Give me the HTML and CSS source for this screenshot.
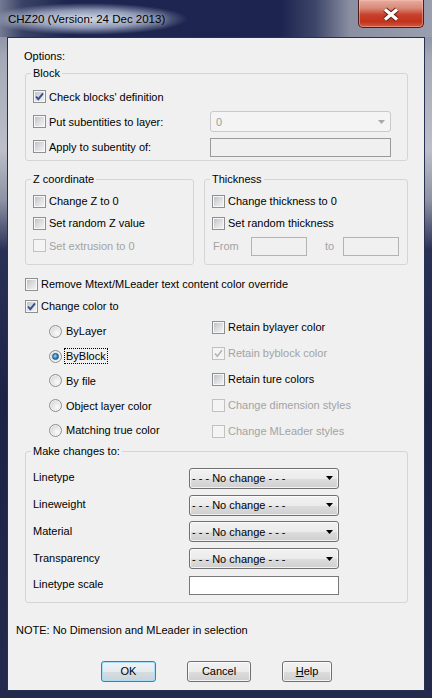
FILE: index.html
```html
<!DOCTYPE html>
<html>
<head>
<meta charset="utf-8">
<link rel="stylesheet" href="styles.css">
</head>
<body>
<div class="window">
  <header class="titlebar">
    <span class="title">CHZ20 (Version: 24 Dec 2013)</span>
    <span class="close">
      <svg width="18" height="15" viewBox="0 0 18 15">
        <path d="M3 2.5 L15 12.5 M15 2.5 L3 12.5" stroke="#5a1d14" stroke-width="5.2" fill="none"/>
        <path d="M3 2.5 L15 12.5 M15 2.5 L3 12.5" stroke="#ffffff" stroke-width="3.4" fill="none"/>
      </svg>
    </span>
  </header>
  <main class="client">
    <div class="options-label">Options:</div>

    <fieldset class="group g-block">
      <legend>Block</legend>
      <div class="row r25">
        <label class="opt"><span class="cb"><svg class="tick" width="11" height="11" viewBox="0 0 11 11"><polyline points="2,5.5 4.3,8.2 9,2.3" fill="none" stroke="#324f8e" stroke-width="1.9"/></svg></span><span>Check blocks' definition</span></label>
      </div>
      <div class="row r25">
        <label class="opt w177"><span class="cb"></span><span>Put subentities to layer:</span></label>
        <div class="dcombo"><span>0</span><svg width="7" height="4" viewBox="0 0 7 4"><polygon points="0,0 7,0 3.5,4" fill="#a8a8a8"/></svg></div>
      </div>
      <div class="row r25">
        <label class="opt w177"><span class="cb"></span><span>Apply to subentity of:</span></label>
        <div class="dtext"></div>
      </div>
    </fieldset>

    <div class="pair">
      <fieldset class="group g-z">
        <legend>Z coordinate</legend>
        <div class="row r22"><label class="opt"><span class="cb"></span><span>Change Z to 0</span></label></div>
        <div class="row r22"><label class="opt"><span class="cb"></span><span>Set random Z value</span></label></div>
        <div class="row r23"><label class="opt dis"><span class="cb off"></span><span>Set extrusion to 0</span></label></div>
      </fieldset>
      <fieldset class="group g-t">
        <legend>Thickness</legend>
        <div class="row r22"><label class="opt"><span class="cb"></span><span>Change thickness to 0</span></label></div>
        <div class="row r22"><label class="opt"><span class="cb"></span><span>Set random thickness</span></label></div>
        <div class="row r23 from-row">
          <span class="from-lbl dis">From</span>
          <span class="small-box"></span>
          <span class="to-lbl dis">to</span>
          <span class="small-box"></span>
        </div>
      </fieldset>
    </div>

    <div class="row r22 first-top"><label class="opt"><span class="cb"></span><span>Remove Mtext/MLeader text content color override</span></label></div>
    <div class="row r22"><label class="opt"><span class="cb"><svg class="tick" width="11" height="11" viewBox="0 0 11 11"><polyline points="2,5.5 4.3,8.2 9,2.3" fill="none" stroke="#324f8e" stroke-width="1.9"/></svg></span><span>Change color to</span></label></div>

    <div class="colors">
      <div class="col-left">
        <div class="row rl"><label class="opt"><span class="rb"></span><span class="rtxt">ByLayer</span></label></div>
        <div class="row rl"><label class="opt"><span class="rb on"><span class="dot"></span></span><span class="rtxt focus">ByBlock</span></label></div>
        <div class="row rl"><label class="opt"><span class="rb"></span><span class="rtxt">By file</span></label></div>
        <div class="row rl"><label class="opt"><span class="rb"></span><span class="rtxt">Object layer color</span></label></div>
        <div class="row rl"><label class="opt"><span class="rb"></span><span class="rtxt">Matching true color</span></label></div>
      </div>
      <div class="col-right">
        <div class="row rr"><label class="opt"><span class="cb"></span><span>Retain bylayer color</span></label></div>
        <div class="row rr"><label class="opt dis"><span class="cb off"><svg class="tick" width="11" height="11" viewBox="0 0 11 11"><polyline points="2,5.5 4.3,8.2 9,2.3" fill="none" stroke="#b4b4b4" stroke-width="1.6"/></svg></span><span>Retain byblock color</span></label></div>
        <div class="row rr"><label class="opt"><span class="cb"></span><span>Retain ture colors</span></label></div>
        <div class="row rr"><label class="opt dis"><span class="cb off"></span><span>Change dimension styles</span></label></div>
        <div class="row rr"><label class="opt dis"><span class="cb off"></span><span>Change MLeader styles</span></label></div>
      </div>
    </div>

    <fieldset class="group g-make">
      <legend>Make changes to:</legend>
      <div class="row rm"><span class="mlbl">Linetype</span><div class="combo"><span>- - - No change - - -</span><svg width="7" height="4" viewBox="0 0 7 4"><polygon points="0,0 7,0 3.5,4" fill="#000"/></svg></div></div>
      <div class="row rm"><span class="mlbl">Lineweight</span><div class="combo"><span>- - - No change - - -</span><svg width="7" height="4" viewBox="0 0 7 4"><polygon points="0,0 7,0 3.5,4" fill="#000"/></svg></div></div>
      <div class="row rm"><span class="mlbl">Material</span><div class="combo"><span>- - - No change - - -</span><svg width="7" height="4" viewBox="0 0 7 4"><polygon points="0,0 7,0 3.5,4" fill="#000"/></svg></div></div>
      <div class="row rm"><span class="mlbl">Transparency</span><div class="combo"><span>- - - No change - - -</span><svg width="7" height="4" viewBox="0 0 7 4"><polygon points="0,0 7,0 3.5,4" fill="#000"/></svg></div></div>
      <div class="row rm"><span class="mlbl">Linetype scale</span><div class="wtext"></div></div>
    </fieldset>

    <p class="note">NOTE: No Dimension and MLeader in selection</p>

    <div class="buttons">
      <span class="btn btn-ok">OK</span>
      <span class="btn btn-cancel">Cancel</span>
      <span class="btn btn-help"><u>H</u>elp</span>
    </div>
  </main>
</div>
</body>
</html>
```

FILE: styles.css
```css
html, body {
  margin: 0;
  padding: 0;
}
body {
  width: 432px;
  height: 698px;
  overflow: hidden;
  font-family: "Liberation Sans", Arial, sans-serif;
  font-size: 11px;
  color: #000;
}
.window {
  width: 432px;
  height: 698px;
  box-sizing: border-box;
  padding: 0 7px 7px 7px;
  display: flex;
  flex-direction: column;
  background: linear-gradient(to bottom, #6f7690 0px, #a6aab8 60px, #bcbfc8 150px, #8d92a4 200px, #2a3156 250px, #1c2347 400px, #232a4d 698px);
}
.titlebar {
  height: 37px;
  margin: 0 -7px;
  display: flex;
  align-items: flex-start;
  flex-shrink: 0;
  background:
    radial-gradient(ellipse 100px 16px at 88px 19px, rgba(214,222,236,0.95) 0%, rgba(190,200,222,0.7) 55%, rgba(60,70,110,0) 100%),
    linear-gradient(to right, #737a92 0px, #3a4366 22px, #1d2550 70px, #1c244f 280px, #3d4669 315px, #8a8fa2 350px, #9a9eae 432px);
}
.title {
  margin-top: 12px;
  padding-left: 8px;
  font-size: 11.5px;
  line-height: 14px;
  color: #000;
  text-shadow: 0 0 6px rgba(255,255,255,0.8);
}
.close {
  margin-left: auto;
  margin-right: 8px;
  width: 66px;
  height: 28px;
  box-sizing: border-box;
  border: 1px solid #4e1c1c;
  border-top: none;
  border-radius: 0 0 5px 5px;
  background: linear-gradient(to bottom, #e6ad9f 0%, #d98a78 30%, #c8412b 55%, #c3321d 80%, #d25a40 100%);
  box-shadow: inset 0 0 0 1px rgba(255,200,190,0.45);
  display: flex;
  align-items: center;
  justify-content: center;
  padding-top: 1px;
}
.client {
  height: 654px;
  box-sizing: border-box;
  border: 1px solid #283150;
  background: #f0f0f0;
  padding: 11px 16px 0 17px;
}
.options-label {
  line-height: 14px;
  margin-left: -1px;
}
.group {
  margin: 3px 0 0 0;
  padding: 3px 7px 1px 7px;
  border: 1px solid #d5d5d5;
  border-radius: 3px;
  min-width: 0;
  box-sizing: border-box;
}
.group legend {
  padding: 0 2px;
  margin-left: -2px;
  line-height: 15px;
}
.row {
  display: flex;
  align-items: center;
}
.r25 { height: 25px; }
.r22 { height: 22px; }
.r23 { height: 23px; }
.opt {
  display: flex;
  align-items: center;
  gap: 3px;
  white-space: nowrap;
}
.w177 { width: 177px; }
.dis { color: #a3a3a3; }
.cb {
  width: 13px;
  height: 13px;
  box-sizing: border-box;
  border: 1px solid #8e8f8f;
  background: linear-gradient(135deg, #b9bcc1 0%, #dcdde0 50%, #f6f6f6 100%);
  box-shadow: inset 0 0 0 1px #f7f7f7;
  flex-shrink: 0;
  display: block;
  position: relative;
}
.cb .tick {
  display: block;
}
.cb.off {
  border-color: #c1c1c1;
  background: #f4f4f4;
  box-shadow: none;
}
.rb {
  width: 13px;
  height: 13px;
  box-sizing: border-box;
  border-radius: 50%;
  border: 1px solid #8e8f8f;
  background: radial-gradient(circle at 65% 65%, #fbfbfb 0%, #e6e6e6 45%, #c8c9cc 100%);
  box-shadow: inset 0 0 0 1px #f2f2f2;
  display: flex;
  align-items: center;
  justify-content: center;
  flex-shrink: 0;
}
.rb .dot {
  width: 7px;
  height: 7px;
  border-radius: 50%;
  box-sizing: border-box;
  border: 1px solid #1c4f79;
  background: radial-gradient(circle at 40% 40%, #9fdcf8 0%, #3c95cf 45%, #0e4f86 100%);
}
.rtxt {
  border: 1px dotted transparent;
  padding: 0 1px;
  line-height: 14px;
  margin-left: -1px;
}
.rtxt.focus {
  border-color: #000;
}
.dcombo {
  width: 181px;
  height: 21px;
  box-sizing: border-box;
  border: 1px solid #c9c9c9;
  border-radius: 3px;
  background: #f4f4f4;
  color: #9c9c9c;
  display: flex;
  align-items: center;
  justify-content: space-between;
  padding: 0 5px 0 5px;
}
.dtext {
  width: 181px;
  height: 19px;
  box-sizing: border-box;
  border: 1px solid #9a9a9a;
  background: #f0f0f0;
  margin-top: 1px;
}
.pair {
  display: flex;
  gap: 10px;
  margin-top: 11px;
}
.pair .group {
  margin-top: 0;
  padding: 3px 7px 7px 7px;
}
.g-z { width: 169px; }
.g-t { width: 204px; }
.from-lbl {
  width: 38px;
  margin-left: 1px;
}
.to-lbl {
  width: 18px;
  margin-left: 18px;
}
.small-box {
  width: 56px;
  height: 19px;
  box-sizing: border-box;
  border: 1px solid #b3b3b3;
  background: #f0f0f0;
  margin-top: 2px;
}
.first-top { margin-top: 8px; }
.colors {
  display: flex;
  height: 127px;
}
.col-left {
  width: 187px;
  box-sizing: border-box;
  padding-left: 24px;
  padding-top: 2px;
}
.rl { height: 24.75px; }
.col-right {
  margin-top: -3px;
}
.rr { height: 26px; }
.g-make {
  margin-top: 0;
  padding: 6px 7px 3px 7px;
}
.rm { height: 26.75px; }
.mlbl {
  width: 156px;
  padding-bottom: 2px;
}
.combo {
  width: 150px;
  height: 21px;
  box-sizing: border-box;
  border: 1px solid #707070;
  border-radius: 3px;
  background: linear-gradient(to bottom, #f2f2f2 0%, #ebebeb 50%, #dddddd 51%, #cfcfcf 100%);
  box-shadow: inset 0 0 0 1px rgba(255,255,255,0.7);
  display: flex;
  align-items: center;
  justify-content: space-between;
  padding: 0 5px 0 2px;
}
.wtext {
  width: 150px;
  height: 19px;
  box-sizing: border-box;
  border: 1px solid #7a7a7a;
  background: #fff;
}
.note {
  margin: 20px 0 0 -9px;
  line-height: 14px;
}
.buttons {
  display: flex;
  gap: 31px;
  margin: 24px 0 0 76px;
}
.btn {
  height: 21px;
  box-sizing: border-box;
  border: 1px solid #707070;
  border-radius: 3px;
  background: linear-gradient(to bottom, #f2f2f2 0%, #ebebeb 50%, #dddddd 51%, #cfcfcf 100%);
  box-shadow: inset 0 0 0 1px rgba(255,255,255,0.75);
  display: flex;
  align-items: center;
  justify-content: center;
  line-height: 14px;
}
.btn-ok {
  width: 55px;
  border-color: #3c7fb1;
  box-shadow: inset 0 0 0 1px #a9def9;
  background: linear-gradient(to bottom, #eef3f6 0%, #e5ebef 50%, #d6dde2 51%, #cbd3d9 100%);
}
.btn-cancel { width: 64px; }
.btn-help { width: 50px; }
.btn u { text-decoration: underline; }
```
